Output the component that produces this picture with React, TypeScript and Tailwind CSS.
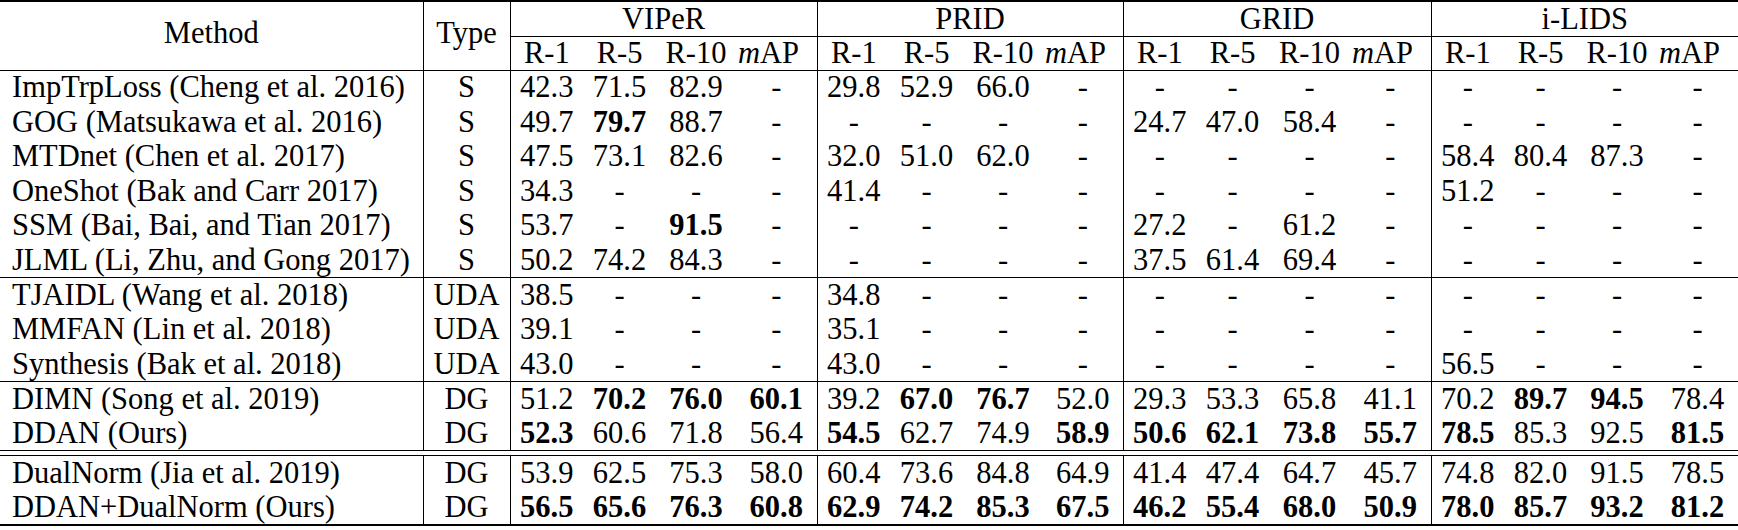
import React from "react";

type Row = { name: string; type: string; vals: string[]; rule?: "single" | "double" };

// "*" at the end of a value means it is set in bold
const rows: Row[] = [
  { name: "ImpTrpLoss (Cheng et al. 2016)", type: "S", vals: ["42.3", "71.5", "82.9", "-", "29.8", "52.9", "66.0", "-", "-", "-", "-", "-", "-", "-", "-", "-"] },
  { name: "GOG (Matsukawa et al. 2016)", type: "S", vals: ["49.7", "79.7*", "88.7", "-", "-", "-", "-", "-", "24.7", "47.0", "58.4", "-", "-", "-", "-", "-"] },
  { name: "MTDnet (Chen et al. 2017)", type: "S", vals: ["47.5", "73.1", "82.6", "-", "32.0", "51.0", "62.0", "-", "-", "-", "-", "-", "58.4", "80.4", "87.3", "-"] },
  { name: "OneShot (Bak and Carr 2017)", type: "S", vals: ["34.3", "-", "-", "-", "41.4", "-", "-", "-", "-", "-", "-", "-", "51.2", "-", "-", "-"] },
  { name: "SSM (Bai, Bai, and Tian 2017)", type: "S", vals: ["53.7", "-", "91.5*", "-", "-", "-", "-", "-", "27.2", "-", "61.2", "-", "-", "-", "-", "-"] },
  { name: "JLML (Li, Zhu, and Gong 2017)", type: "S", vals: ["50.2", "74.2", "84.3", "-", "-", "-", "-", "-", "37.5", "61.4", "69.4", "-", "-", "-", "-", "-"], rule: "single" },
  { name: "TJAIDL (Wang et al. 2018)", type: "UDA", vals: ["38.5", "-", "-", "-", "34.8", "-", "-", "-", "-", "-", "-", "-", "-", "-", "-", "-"] },
  { name: "MMFAN (Lin et al. 2018)", type: "UDA", vals: ["39.1", "-", "-", "-", "35.1", "-", "-", "-", "-", "-", "-", "-", "-", "-", "-", "-"] },
  { name: "Synthesis (Bak et al. 2018)", type: "UDA", vals: ["43.0", "-", "-", "-", "43.0", "-", "-", "-", "-", "-", "-", "-", "56.5", "-", "-", "-"], rule: "single" },
  { name: "DIMN (Song et al. 2019)", type: "DG", vals: ["51.2", "70.2*", "76.0*", "60.1*", "39.2", "67.0*", "76.7*", "52.0", "29.3", "53.3", "65.8", "41.1", "70.2", "89.7*", "94.5*", "78.4"] },
  { name: "DDAN (Ours)", type: "DG", vals: ["52.3*", "60.6", "71.8", "56.4", "54.5*", "62.7", "74.9", "58.9*", "50.6*", "62.1*", "73.8*", "55.7*", "78.5*", "85.3", "92.5", "81.5*"], rule: "double" },
  { name: "DualNorm (Jia et al. 2019)", type: "DG", vals: ["53.9", "62.5", "75.3", "58.0", "60.4", "73.6", "84.8", "64.9", "41.4", "47.4", "64.7", "45.7", "74.8", "82.0", "91.5", "78.5"] },
  { name: "DDAN+DualNorm (Ours)", type: "DG", vals: ["56.5*", "65.6*", "76.3*", "60.8*", "62.9*", "74.2*", "85.3*", "67.5*", "46.2*", "55.4*", "68.0*", "50.9*", "78.0*", "85.7*", "93.2*", "81.2*"] },
];

const datasets = ["VIPeR", "PRID", "GRID", "i-LIDS"];
const colWidths = [423, 87, 73, 73, 80, 81, 73, 73, 80, 80, 73, 73, 81, 81, 73, 73, 80, 81];

const Val = ({ v }: { v: string }) =>
  v.endsWith("*") ? <b className="font-bold">{v.slice(0, -1)}</b> : <>{v}</>;

export default function App() {
  return (
    <div className="w-[1738px] h-[530px] bg-white text-black overflow-hidden font-['Liberation_Serif','Times_New_Roman',serif]">
      <table className="table-fixed border-collapse w-[1738px] text-[30.5px] leading-none">
        <colgroup>
          {colWidths.map((w, i) => (
            <col key={i} style={{ width: w }} />
          ))}
        </colgroup>
        <thead>
          <tr className="h-[35px] border-t-2 border-black">
            <th rowSpan={2} className="font-normal text-center pb-[6px] border-r border-black border-b">Method</th>
            <th rowSpan={2} className="font-normal text-center pb-[6px] border-r border-black border-b">Type</th>
            {datasets.map((d, i) => (
              <th key={d} colSpan={4} className={"font-normal text-center border-b border-black " + (i < 3 ? "border-r" : "")}>
                {d}
              </th>
            ))}
          </tr>
          <tr className="h-[34px] border-b border-black">
            {datasets.map((d, i) => (
              <React.Fragment key={d}>
                <th className="font-normal text-center">R-1</th>
                <th className="font-normal text-center">R-5</th>
                <th className="font-normal text-center">R-10</th>
                <th className={"font-normal text-left pl-[2px] border-black " + (i < 3 ? "border-r" : "")}>
                  <i>m</i>AP
                </th>
              </React.Fragment>
            ))}
          </tr>
        </thead>
        <tbody>
          {rows.map((r) => (
            <React.Fragment key={r.name}>
              <tr className={"h-[34.6px] " + (r.rule === "single" ? "border-b border-black" : "")}>
                <td className="text-left pl-[12px] whitespace-nowrap border-r border-black">{r.name}</td>
                <td className="text-center border-r border-black">{r.type}</td>
                {r.vals.map((v, j) => (
                  <td key={j} className={"text-center whitespace-nowrap border-black " + (j % 4 === 3 && j < 15 ? "border-r" : "")}>
                    <Val v={v} />
                  </td>
                ))}
              </tr>
              {r.rule === "double" && (
                <tr className="h-[5px]">
                  <td colSpan={18} className="p-0 border-t border-b border-black" />
                </tr>
              )}
            </React.Fragment>
          ))}
          <tr className="border-t-2 border-black">
            <td colSpan={18} className="p-0" />
          </tr>
        </tbody>
      </table>
    </div>
  );
}
